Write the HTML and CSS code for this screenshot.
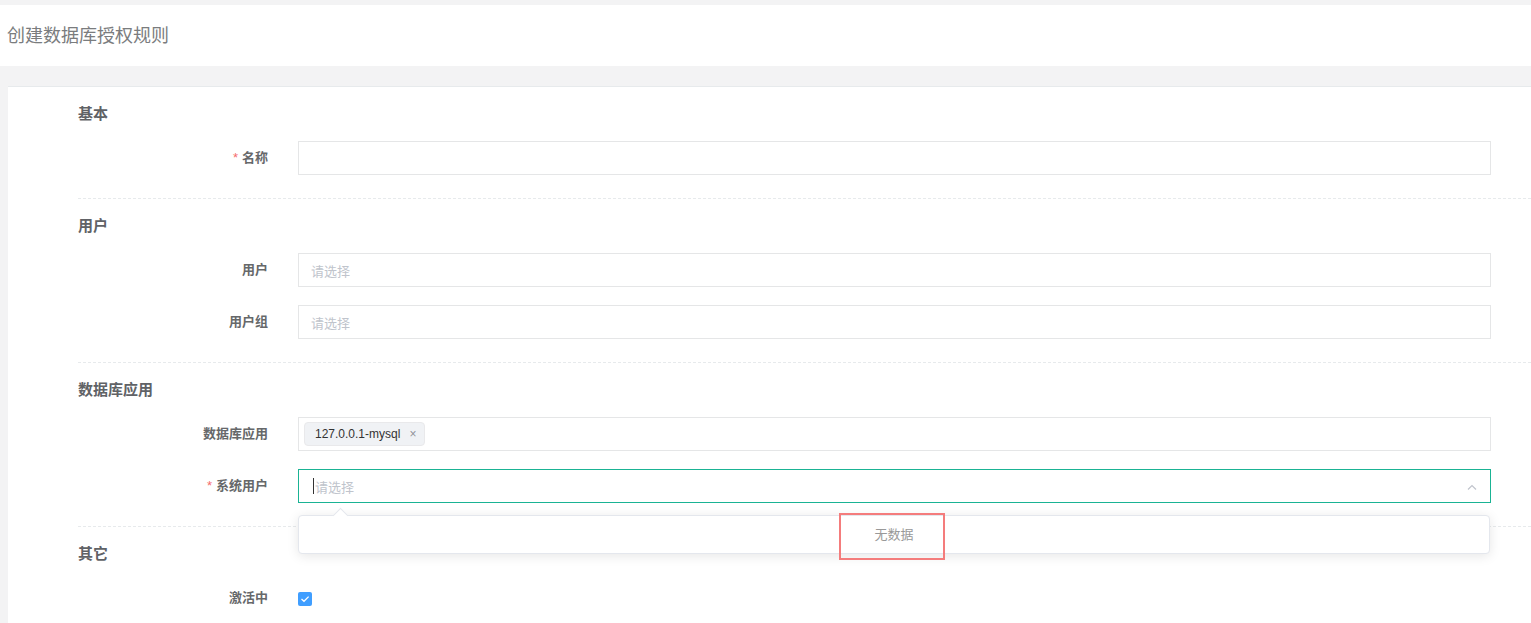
FILE: index.html
```html
<!DOCTYPE html>
<html>
<head>
    <title>创建数据库授权规则</title>
    <link rel="stylesheet" href="styles.css">
</head>
<body>
    <div class="topbar"></div>
    <div class="page-heading">
        <h2>创建数据库授权规则</h2>
    </div>
    <div class="wrapper">
        <div class="ibox">
            <form class="form-horizontal">
                <h3 class="section-title">基本</h3>
                <div class="form-group">
                    <label class="control-label required">名称</label>
                    <div class="control"><div class="form-control"></div></div>
                </div>
                <div class="hr-line-dashed"></div>

                <h3 class="section-title">用户</h3>
                <div class="form-group">
                    <label class="control-label">用户</label>
                    <div class="control"><div class="form-control placeholder">请选择</div></div>
                </div>
                <div class="form-group">
                    <label class="control-label">用户组</label>
                    <div class="control"><div class="form-control placeholder">请选择</div></div>
                </div>
                <div class="hr-line-dashed"></div>

                <h3 class="section-title">数据库应用</h3>
                <div class="form-group">
                    <label class="control-label">数据库应用</label>
                    <div class="control">
                        <div class="form-control tags">
                            <span class="tag">127.0.0.1-mysql <span class="tag-close">×</span></span>
                        </div>
                    </div>
                </div>
                <div class="form-group">
                    <label class="control-label required">系统用户</label>
                    <div class="control">
                        <div class="form-control placeholder is-focus">
                            <span class="caret-line"></span>请选择
                            <svg class="arrow-up" width="10" height="6" viewBox="0 0 10 6"><path d="M1 5.5 L5 1.5 L9 5.5" fill="none" stroke="#c0c4cc" stroke-width="1.2"/></svg>
                        </div>
                        <div class="dropdown">
                            <span class="dropdown-arrow"></span>
                            <p class="empty">无数据</p>
                        </div>
                    </div>
                </div>
                <div class="hr-line-dashed"></div>

                <h3 class="section-title">其它</h3>
                <div class="form-group">
                    <label class="control-label">激活中</label>
                    <div class="control">
                        <span class="checkbox">
                            <svg width="10" height="8" viewBox="0 0 10 8"><path d="M1.5 4 L4 6.3 L8.6 1.6" fill="none" stroke="#fff" stroke-width="1.3"/></svg>
                        </span>
                    </div>
                </div>
            </form>
        </div>
    </div>
    <div class="mark"></div>
</body>
</html>
```

FILE: styles.css
```css
body {
    margin: 0;
    font-family: "Liberation Sans", "Noto Sans CJK SC", sans-serif;
    font-size: 13px;
    color: #606266;
    background-color: #f3f3f4;
    overflow: hidden;
}

.topbar {
    height: 5px;
    background-color: #f3f3f4;
}

.page-heading {
    height: 61px;
    background-color: #fff;
    display: flex;
    align-items: center;
    padding-left: 7px;
}

.page-heading h2 {
    margin: 0 0 3px;
    font-size: 18px;
    font-weight: normal;
    color: #7a7c7e;
}

.wrapper {
    padding: 20px 0 0 8px;
}

.ibox {
    background-color: #fff;
    border-top: 1px solid #e7eaec;
    padding: 18px 0 40px 70px;
}

.section-title {
    margin: 0 0 18px;
    font-size: 15px;
    line-height: 18px;
    font-weight: bold;
    color: #606266;
}

.form-group {
    display: flex;
    align-items: center;
    height: 34px;
    margin-bottom: 18px;
    padding-right: 40px;
}

.control-label {
    width: 190px;
    text-align: right;
    font-weight: bold;
    color: #66686a;
    margin: 0 30px 4px 0;
    flex-shrink: 0;
}

.required::before {
    content: "*";
    color: #f56c6c;
    margin-right: 4px;
    font-weight: normal;
}

.control {
    flex: 1;
    position: relative;
}

.form-control {
    box-sizing: border-box;
    height: 34px;
    border: 1px solid #e5e6e7;
    padding: 0 12px;
    display: flex;
    align-items: center;
    background-color: #fff;
}

.placeholder {
    color: #c0c4cc;
}

.is-focus {
    border-color: #1ab394;
    position: relative;
}

.caret-line {
    display: inline-block;
    width: 1px;
    height: 16px;
    background-color: #333;
    margin: 0 1px 0 2px;
}

.arrow-up {
    position: absolute;
    right: 13px;
    top: 14px;
}

.tags {
    padding-left: 5px;
}

.tag {
    display: inline-flex;
    align-items: center;
    box-sizing: border-box;
    height: 24px;
    padding: 0 8px 0 10px;
    background-color: #f0f2f5;
    border: 1px solid #e9e9eb;
    border-radius: 4px;
    font-size: 12px;
    color: #333;
}

.tag-close {
    margin-left: 9px;
    color: #909399;
    font-size: 12px;
}

.hr-line-dashed {
    border-top: 1px dashed #e7eaec;
    margin: 23px 0 18px;
}

.dropdown {
    position: absolute;
    top: 46px;
    left: 0;
    right: 1px;
    height: 39px;
    box-sizing: border-box;
    background-color: #fff;
    border: 1px solid #e4e7ed;
    border-radius: 4px;
    box-shadow: 0 2px 12px rgba(0, 0, 0, 0.1);
    z-index: 2;
}

.dropdown-arrow {
    position: absolute;
    top: -6px;
    left: 36px;
    width: 10px;
    height: 10px;
    background-color: #fff;
    border-top: 1px solid #e4e7ed;
    border-left: 1px solid #e4e7ed;
    transform: rotate(45deg);
}

.empty {
    margin: 0;
    line-height: 37px;
    text-align: center;
    color: #999;
}

.checkbox {
    display: inline-flex;
    align-items: center;
    justify-content: center;
    width: 14px;
    height: 14px;
    border-radius: 2px;
    background-color: #409eff;
}

.mark {
    position: absolute;
    left: 839px;
    top: 513px;
    width: 106px;
    height: 47px;
    box-sizing: border-box;
    border: 2px solid #f47c7c;
    z-index: 3;
}
```
